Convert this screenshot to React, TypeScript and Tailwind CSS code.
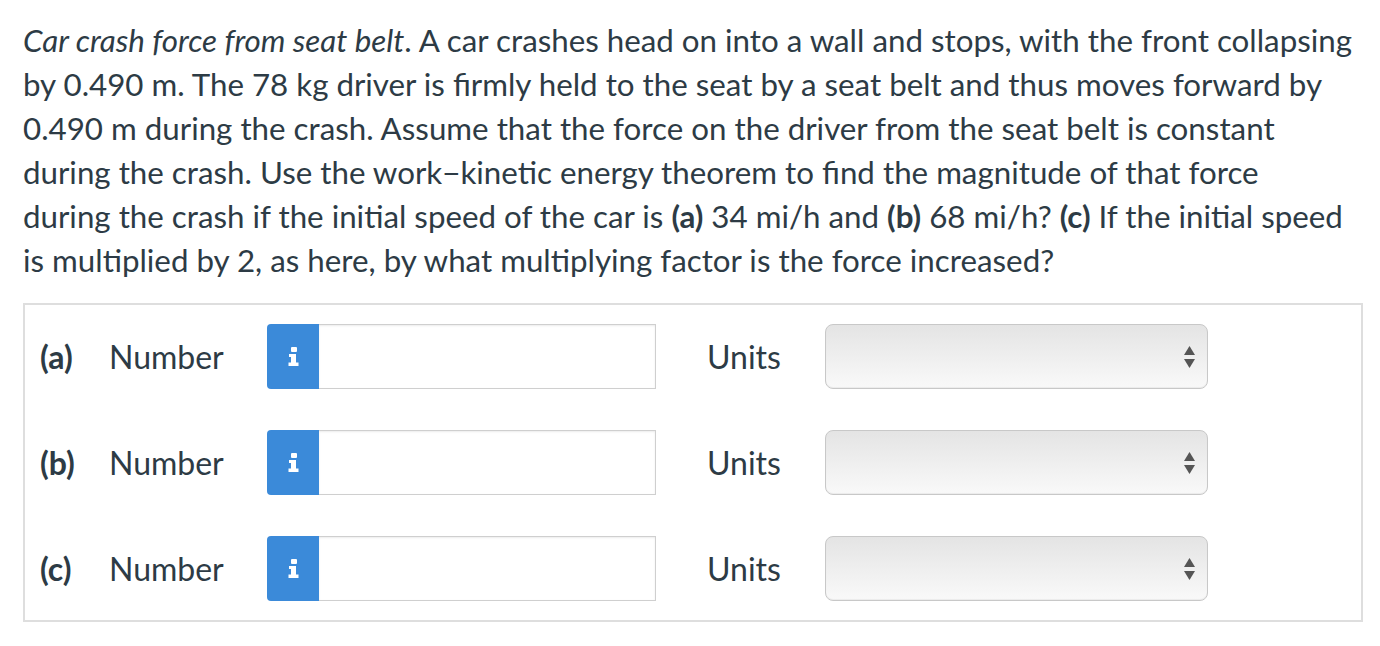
import React from "react";

const rows = ["a", "b", "c"];

function InfoGlyph() {
  return (
    <svg width="11" height="19" viewBox="0 0 11 19" aria-hidden>
      <rect x="3" y="0" width="6" height="5" rx="1" fill="#fff" />
      <path d="M1 7h7v8.5h2.5V19H0.5v-3.5H3V10H1z" fill="#fff" />
    </svg>
  );
}

function SelectArrows() {
  return (
    <svg width="11" height="22" viewBox="0 0 11 22" aria-hidden>
      <path d="M5.5 0L11 9H0z" fill="#555" />
      <path d="M5.5 22L11 13H0z" fill="#555" />
    </svg>
  );
}

function AnswerRow({ part }: { part: string }) {
  return (
    <div className="flex h-[65px] items-center text-[32px]">
      <span className="w-[69px] font-bold">({part})</span>
      <span className="w-[158px]">Number</span>
      <div className="flex h-full w-[389px]">
        <div className="flex w-[52px] items-center justify-center rounded-l-[4px] bg-[#3b8ad9]">
          <InfoGlyph />
        </div>
        <div className="flex-1 border border-l-0 border-[#cfcfcf] bg-white shadow-[inset_0_1px_2px_rgba(0,0,0,0.08)]" />
      </div>
      <span className="ml-[51px] w-[118px]">Units</span>
      <div className="flex h-full w-[383px] items-center justify-end rounded-[8px] border border-[#c8c8c8] bg-gradient-to-b from-[#e4e4e4] to-[#f9f9f9] pr-[12px] shadow-[inset_0_-1px_1px_rgba(0,0,0,0.06)]">
        <SelectArrows />
      </div>
    </div>
  );
}

export default function App() {
  return (
    <div className="h-[646px] w-[1380px] bg-white px-[23px] pt-[18px] font-['Lato',sans-serif] text-[#2d3b45]">
      <p className="w-[1357px] text-[31.3px] leading-[44px]">
        <i>Car crash force from seat belt</i>. A car crashes head on into a wall and stops, with the front collapsing
        <br />
        by 0.490 m. The 78 kg driver is firmly held to the seat by a seat belt and thus moves forward by
        <br />
        0.490 m during the crash. Assume that the force on the driver from the seat belt is constant
        <br />
        during the crash. Use the work&minus;kinetic energy theorem to find the magnitude of that force
        <br />
        during the crash if the initial speed of the car is <b>(a)</b> 34 mi/h and <b>(b)</b> 68 mi/h? <b>(c)</b> If
        the initial speed
        <br />
        is multiplied by 2, as here, by what multiplying factor is the force increased?
      </p>
      <div className="mt-[21px] flex w-[1340px] flex-col gap-[41px] border-2 border-[#dedede] px-[15px] py-[19px]">
        {rows.map((r) => (
          <AnswerRow key={r} part={r} />
        ))}
      </div>
    </div>
  );
}
